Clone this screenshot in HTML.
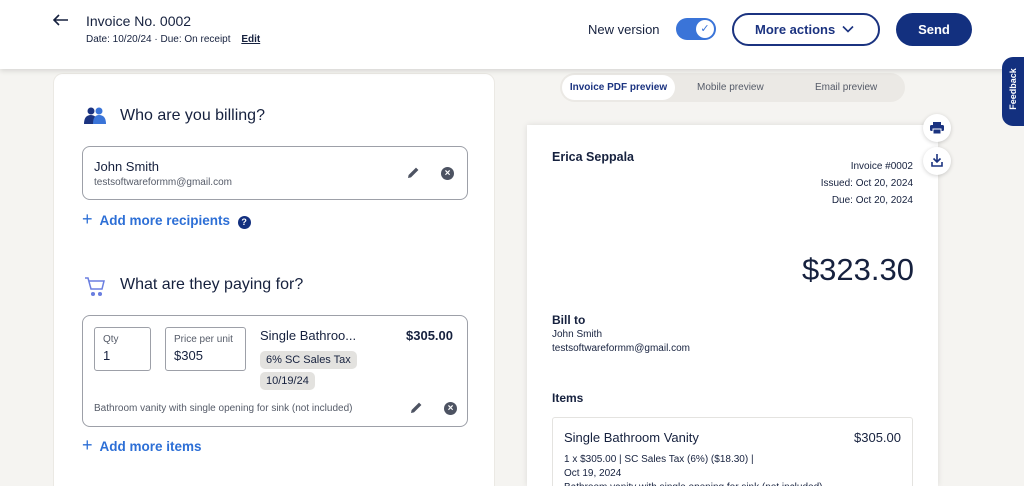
<!DOCTYPE html>
<html style="overflow:hidden;width:1024px;height:486px"><head><style>
*{box-sizing:border-box;margin:0;padding:0}
body{width:1024px;height:486px;overflow:hidden;background:#f5f4f1;font-family:"Liberation Sans",sans-serif;color:#16213e;position:relative}
.abs{position:absolute}
.hdr{left:0;top:0;width:1024px;height:69px;background:#fff;box-shadow:0 2px 5px rgba(0,0,0,.12);z-index:2}
.card{left:53px;top:73px;width:442px;height:413px;background:#fff;border-radius:10px 10px 0 0;border:1px solid #ebe9e4;border-bottom:none}
.box{border:1px solid #9da0a8;border-radius:8px}
.blue{color:#2d6fd6;font-weight:bold}
.tag{background:#e3e2df;border-radius:5px;font-size:11px;padding:3px 6px;display:inline-block}
.x{width:13px;height:13px;border-radius:50%;background:#4d5362;color:#fff;font-size:10px;line-height:13px;text-align:center;font-weight:bold}
.paper{left:527px;top:125px;width:411px;height:361px;background:#fff;box-shadow:0 0 6px rgba(0,0,0,.1);overflow:hidden}
.circ{width:28px;height:28px;border-radius:50%;background:#fff;box-shadow:0 1px 4px rgba(0,0,0,.18);z-index:3}
</style></head><body>
<div class="abs hdr">
 <svg class="abs" style="left:53px;top:14px" width="16" height="12" viewBox="0 0 16 12" fill="none" stroke="#16213e" stroke-width="1.6"><path d="M15 6H1M6 1L1 6l5 5"/></svg>
 <div class="abs" style="left:86px;top:13px;font-size:14px">Invoice No. 0002</div>
 <div class="abs" style="left:86px;top:34px;font-size:10px">Date: 10/20/24 · Due: On receipt <b style="margin-left:8px;text-decoration:underline">Edit</b></div>
 <div class="abs" style="left:588px;top:22px;font-size:13px">New version</div>
 <div class="abs" style="left:676px;top:18px;width:40px;height:22px;border-radius:11px;background:#3a74d8"><div class="abs" style="right:2px;top:2px;width:18px;height:18px;border-radius:50%;background:#fff;color:#3a74d8;font-size:11px;text-align:center;line-height:18px">✓</div></div>
 <div class="abs" style="left:732px;top:13px;width:148px;height:33px;border:2px solid #1b3380;border-radius:17px;color:#1b3380;font-weight:bold;font-size:13px;line-height:29px;padding-left:21px">More actions
  <svg class="abs" style="left:108px;top:10px" width="12" height="8" viewBox="0 0 12 8" fill="none" stroke="#1b3380" stroke-width="1.6"><path d="M1 1.5l5 5 5-5"/></svg></div>
 <div class="abs" style="left:896px;top:13px;width:76px;height:33px;background:#13307f;border-radius:17px;color:#fff;font-weight:bold;font-size:13px;text-align:center;line-height:33px">Send</div>
</div>
<div class="abs" style="left:1002px;top:57px;width:22px;height:69px;background:#13307f;border-radius:11px 0 0 11px;z-index:3"><div class="abs" style="left:-18px;top:27px;transform:rotate(-90deg);color:#fff;font-size:9px;font-weight:bold;width:58px;text-align:center">Feedback</div></div>

<div class="abs card">
 <svg class="abs" style="left:30px;top:33px" width="22" height="18" viewBox="0 0 22 18"><circle cx="7" cy="4" r="3.5" fill="#1b3380"/><path d="M0 17 Q0 8 7 8 Q12 8 12 13 V17Z" fill="#1b3380"/><circle cx="15" cy="4" r="3.5" fill="#3a74d8"/><path d="M9 17 Q9 8 15 8 Q22 8 22 17Z" fill="#3a74d8"/></svg>
 <div class="abs" style="left:66px;top:33px;font-size:16px">Who are you billing?</div>
 <div class="abs box" style="left:28px;top:72px;width:386px;height:54px">
  <div class="abs" style="left:11px;top:12px;font-size:13px">John Smith</div>
  <div class="abs" style="left:11px;top:30px;font-size:10px;color:#555b68">testsoftwareformm@gmail.com</div>
  <svg class="abs" style="left:324px;top:19px" width="13" height="13" viewBox="0 0 13 13"><path d="M1 12l.6-3L9 1.6l2.4 2.4L4 11.4z" fill="#4d5362"/></svg>
  <div class="abs x" style="left:358px;top:20px">×</div>
 </div>
 <div class="abs blue" style="left:28px;top:138px;font-size:13.5px"><span style="font-weight:normal;font-size:18px;line-height:14px">+</span>&nbsp; Add more recipients &nbsp;<span style="display:inline-block;width:13px;height:13px;border-radius:50%;background:#13307f;color:#fff;font-size:9px;text-align:center;line-height:13px">?</span></div>
 <svg class="abs" style="left:30px;top:203px" width="22" height="20" viewBox="0 0 22 20" fill="none" stroke="#6b7fe0" stroke-width="1.5"><path d="M1 1h3l3 11h11l2-8H5"/><circle cx="9" cy="17" r="1.3" fill="#6b7fe0"/><circle cx="16" cy="17" r="1.3" fill="#6b7fe0"/></svg>
 <div class="abs" style="left:66px;top:202px;font-size:16px">What are they paying for?</div>
 <div class="abs box" style="left:28px;top:241px;width:386px;height:112px">
  <div class="abs" style="left:11px;top:11px;width:57px;height:44px;border:1px solid #9da0a8;border-radius:3px;padding:6px 8px"><div style="font-size:10px;color:#555b68">Qty</div><div style="font-size:13px;margin-top:3px">1</div></div>
  <div class="abs" style="left:82px;top:11px;width:81px;height:44px;border:1px solid #9da0a8;border-radius:3px;padding:6px 8px"><div style="font-size:10px;color:#555b68">Price per unit</div><div style="font-size:13px;margin-top:3px">$305</div></div>
  <div class="abs" style="left:177px;top:12px;font-size:13px">Single Bathroo...</div>
  <div class="abs" style="left:323px;top:12px;font-size:13px;font-weight:bold">$305.00</div>
  <div class="abs tag" style="left:177px;top:35px">6% SC Sales Tax</div>
  <div class="abs tag" style="left:177px;top:56px">10/19/24</div>
  <div class="abs" style="left:11px;top:87px;font-size:10px;color:#555b68">Bathroom vanity with single opening for sink (not included)</div>
  <svg class="abs" style="left:327px;top:85px" width="13" height="13" viewBox="0 0 13 13"><path d="M1 12l.6-3L9 1.6l2.4 2.4L4 11.4z" fill="#4d5362"/></svg>
  <div class="abs x" style="left:361px;top:86px">×</div>
 </div>
 <div class="abs blue" style="left:28px;top:364px;font-size:13.5px"><span style="font-weight:normal;font-size:18px;line-height:14px">+</span>&nbsp; Add more items</div>
</div>

<div class="abs" style="left:560px;top:73px;width:345px;height:29px;background:#ebe9e5;border-radius:15px">
 <div class="abs" style="left:2px;top:2px;width:113px;height:25px;background:#fff;border-radius:13px;font-size:10px;font-weight:bold;color:#1b3380;text-align:center;line-height:25px">Invoice PDF preview</div>
 <div class="abs" style="left:137px;top:9px;font-size:10px;color:#555b68">Mobile preview</div>
 <div class="abs" style="left:255px;top:9px;font-size:10px;color:#555b68">Email preview</div>
</div>
<div class="abs circ" style="left:923px;top:114px"><svg class="abs" style="left:7px;top:8px" width="14" height="12" viewBox="0 0 14 12"><rect x="3" y="0" width="8" height="3" fill="#1b3380"/><rect x="0" y="3" width="14" height="6" rx="1.5" fill="#1b3380"/><rect x="3" y="7" width="8" height="5" fill="#1b3380" stroke="#fff" stroke-width="1"/></svg></div>
<div class="abs circ" style="left:923px;top:147px"><svg class="abs" style="left:8px;top:7px" width="12" height="13" viewBox="0 0 12 13" fill="none" stroke="#1b3380" stroke-width="1.6"><path d="M6 0v8M2.5 4.5L6 8l3.5-3.5M1 8v4h10V8"/></svg></div>

<div class="abs paper">
 <div class="abs" style="left:25px;top:25px;font-size:12.5px;font-weight:bold">Erica Seppala</div>
 <div class="abs" style="right:25px;top:33px;font-size:10px;text-align:right;line-height:17px">Invoice #0002<br>Issued: Oct 20, 2024<br>Due: Oct 20, 2024</div>
 <div class="abs" style="right:24px;top:127px;font-size:31px">$323.30</div>
 <div class="abs" style="left:25px;top:188px;font-size:12px;font-weight:bold">Bill to</div>
 <div class="abs" style="left:25px;top:203px;font-size:10px;line-height:14px">John Smith<br>testsoftwareformm@gmail.com</div>
 <div class="abs" style="left:25px;top:266px;font-size:12px;font-weight:bold">Items</div>
 <div class="abs" style="left:25px;top:292px;width:361px;height:100px;border:1px solid #e4e3e0;border-radius:3px">
  <div class="abs" style="left:11px;top:12px;font-size:13px">Single Bathroom Vanity</div>
  <div class="abs" style="right:11px;top:12px;font-size:13px">$305.00</div>
  <div class="abs" style="left:11px;top:35px;font-size:10px;line-height:14px">1 x $305.00 | SC Sales Tax (6%) ($18.30) |<br>Oct 19, 2024<br>Bathroom vanity with single opening for sink (not included)</div>
 </div>
</div>
</body></html>
